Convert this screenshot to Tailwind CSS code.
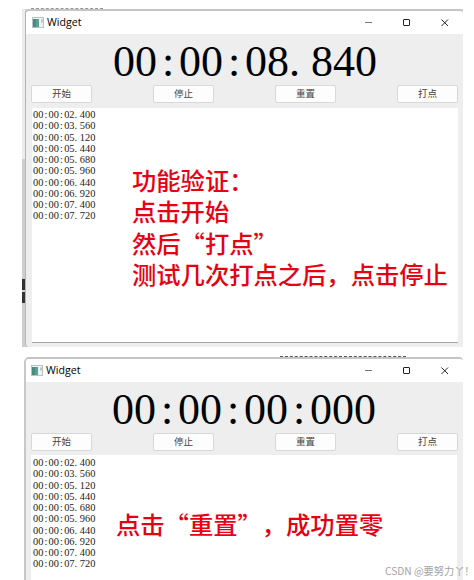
<!DOCTYPE html>
<html lang="zh-CN">
  <head>
    <meta charset="utf-8" />
    <meta content="width=device-width, initial-scale=1.0" name="viewport" />
    <title>Widget</title>
    <script src="https://cdn.jsdelivr.net/npm/@tailwindcss/browser@4"></script>
  </head>
  <body class="relative w-[474px] h-[580px] overflow-hidden bg-white font-['Noto_Sans_CJK_SC',sans-serif]">
    <!-- Stopwatch stopped -->
    <section class="relative mt-[9px] ml-[22px] w-[441px] h-[338px] bg-[#cfcfcf] pl-[3px]">
      <div class="absolute left-0 top-0 w-[3px] h-[150px] bg-[#ececec]"></div>
      <div class="absolute left-0 top-[270px] w-[3px] h-[11px] bg-[#333333]"></div>
      <div class="absolute left-0 top-[283px] w-[3px] h-[11px] bg-[#333333]"></div>
      <div class="w-[438px] h-[338px] flex flex-col bg-[#eeeeee] border-t-2 border-l border-t-[#c4c4c4] border-l-[#b4b4b4] rounded-tl-[5px] rounded-tr-[4px] rounded-bl-[4px] overflow-hidden">
        <div class="h-[23px] shrink-0 bg-white flex items-center pl-[6px]">
          <svg class="w-[12px] h-[11px]" viewBox="0 0 12 11"><rect x=".5" y=".5" width="11" height="10" fill="#eef2f4" stroke="#b4c3c8"/><rect x="1" y="2" width="6" height="8" fill="#5aa08f"/><rect x="1" y="2" width="3" height="8" fill="#458c7c"/><path d="M10 2.500v3" stroke="#8b9aa0"/></svg>
          <span class="ml-[3px] text-[10.6px] leading-none text-black font-['Open_Sans',sans-serif]">Widget</span>
          <svg class="ml-auto mr-[2px] w-[100px] h-[12px]" viewBox="0 0 100 12" fill="none"><path d="M4 5.500h7" stroke="#777"/><rect x="42.500" y="2.500" width="6" height="6" rx=".5" stroke="#222"/><path d="M80.500 2.500l6.500 6.500M87 2.500l-6.500 6.500" stroke="#222"/></svg>
        </div>
        <div class="clock h-[51px] shrink-0 pl-[87px] pt-[3px] whitespace-nowrap text-[44px] leading-[50px] text-black font-['Liberation_Serif',serif]">00:00:08.840</div>
        <div class="h-[18px] shrink-0 pl-[5px] pr-[5px] flex justify-between text-[9.5px] text-[#444]">
          <button class="w-[61px] h-[18px] bg-[#fdfdfd] border border-[#d8d8d8] rounded-[2px] leading-none">开始</button>
          <button class="w-[61px] h-[18px] bg-[#fdfdfd] border border-[#d8d8d8] rounded-[2px] leading-none">停止</button>
          <button class="w-[61px] h-[18px] bg-[#fdfdfd] border border-[#d8d8d8] rounded-[2px] leading-none">重置</button>
          <button class="w-[61px] h-[18px] bg-[#fdfdfd] border border-[#d8d8d8] rounded-[2px] leading-none">打点</button>
        </div>
        <div class="relative mt-[5px] ml-[6px] w-[426px] h-[235px] shrink-0 bg-white border-b border-[#a8a8a8] pl-px pt-px">
          <div class="laps text-[10.4px] leading-[11.25px] text-[#222] font-['Liberation_Serif',serif]"></div>
          <p class="absolute left-[100px] top-[56px] whitespace-nowrap text-[24.3px] leading-[31.3px] font-medium text-[#e60012] [text-spacing-trim:space-all]">功能验证：<br />点击开始<br />然后“打点”<br />测试几次打点之后，点击停止</p>
        </div>
      </div>
    </section>

    <!-- Stopwatch after reset -->
    <section class="mt-[10px] ml-[24px] w-[439px] h-[223px] flex flex-col bg-[#eeeeee] border-t-2 border-l-2 border-t-[#c4c4c4] border-l-[#c8c8c8] rounded-tl-[5px] rounded-tr-[4px] overflow-hidden">
      <div class="h-[23px] shrink-0 bg-white flex items-center pl-[5px]">
        <svg class="w-[12px] h-[11px]" viewBox="0 0 12 11"><rect x=".5" y=".5" width="11" height="10" fill="#eef2f4" stroke="#b4c3c8"/><rect x="1" y="2" width="6" height="8" fill="#5aa08f"/><rect x="1" y="2" width="3" height="8" fill="#458c7c"/><path d="M10 2.500v3" stroke="#8b9aa0"/></svg>
        <span class="ml-[3px] text-[10.6px] leading-none text-black font-['Open_Sans',sans-serif]">Widget</span>
        <svg class="ml-auto mr-[2px] w-[100px] h-[12px]" viewBox="0 0 100 12" fill="none"><path d="M4 5.500h7" stroke="#777"/><rect x="42.500" y="2.500" width="6" height="6" rx=".5" stroke="#222"/><path d="M80.500 2.500l6.500 6.500M87 2.500l-6.500 6.500" stroke="#222"/></svg>
      </div>
      <div class="clock h-[51px] shrink-0 pl-[86px] pt-[3px] whitespace-nowrap text-[44px] leading-[50px] text-black font-['Liberation_Serif',serif]">00:00:00:000</div>
      <div class="h-[18px] shrink-0 pl-[5px] pr-[5px] flex justify-between text-[9.5px] text-[#444]">
        <button class="w-[61px] h-[18px] bg-[#fdfdfd] border border-[#d8d8d8] rounded-[2px] leading-none">开始</button>
        <button class="w-[61px] h-[18px] bg-[#fdfdfd] border border-[#d8d8d8] rounded-[2px] leading-none">停止</button>
        <button class="w-[61px] h-[18px] bg-[#fdfdfd] border border-[#d8d8d8] rounded-[2px] leading-none">重置</button>
        <button class="w-[61px] h-[18px] bg-[#fdfdfd] border border-[#d8d8d8] rounded-[2px] leading-none">打点</button>
      </div>
      <div class="relative mt-[4px] ml-[5px] w-[426px] h-[125px] shrink-0 bg-white pl-[2px] pt-[2px]">
        <div class="laps text-[10.4px] leading-[11.25px] text-[#222] font-['Liberation_Serif',serif]"></div>
        <p class="absolute left-[85px] top-[53px] whitespace-nowrap text-[24.3px] leading-[31.3px] font-medium text-[#e60012] [text-spacing-trim:space-all]">点击“重置”，成功置零</p>
      </div>
    </section>

    <!-- Slivers of what lies behind the windows -->
    <div class="absolute left-[31px] top-[8px] w-[72px] border-t border-dashed border-[#8f9a8f]"></div>
    <div class="absolute left-[280px] top-[356px] w-[126px] border-t border-dashed border-[#555]"></div>
    <div class="absolute left-[385px] top-[564px] whitespace-nowrap text-[10.2px] leading-[14px] text-[#a3a3a3]">CSDN @要努力丫！</div>

    <script>
      const laps = ["00:00:02.400", "00:00:03.560", "00:00:05.120", "00:00:05.440", "00:00:05.680",
        "00:00:05.960", "00:00:06.440", "00:00:06.920", "00:00:07.400", "00:00:07.720"];

      // every separator takes the width of one digit
      function cells(time) {
        return [...time].map((c) => {
          if (c === ":") return '<span class="inline-block w-[0.5em] text-center">:</span>';
          if (c === ".") return '<span class="inline-block w-[0.5em] text-left">.</span>';
          return c;
        }).join("");
      }

      document.querySelectorAll(".clock").forEach((el) => (el.innerHTML = cells(el.textContent)));
      document.querySelectorAll(".laps").forEach((el) => {
        el.innerHTML = laps.map((lap) => `<div class="whitespace-nowrap">${cells(lap)}</div>`).join("");
      });
    </script>
  </body>
</html>
